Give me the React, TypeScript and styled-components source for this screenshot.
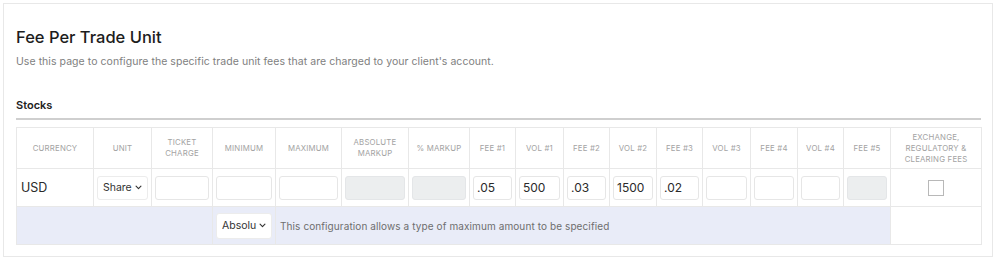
import React from "react";
import styled, { createGlobalStyle } from "styled-components";

const Global = createGlobalStyle`
  html, body { margin: 0; padding: 0; background: #fff; }
  body { font-family: "Inter", "Noto Sans", sans-serif; color: #222; }
  * { box-sizing: border-box; }
`;

const Panel = styled.div`
  margin: 3px;
  width: 990px;
  height: 254px;
  border: 1px solid #e8e8e8;
  padding: 23px 11px 0 12px;
`;

const Title = styled.h1`
  margin: 0;
  font-size: 16.5px;
  line-height: 20px;
  font-weight: 500;
  color: #1d1d1d;
`;

const Subtitle = styled.p`
  margin: 8px 0 0;
  font-size: 10.5px;
  line-height: 14px;
  color: #808080;
  letter-spacing: 0.05px;
`;

const Section = styled.div`
  margin-top: 29px;
  padding-bottom: 6px;
  border-bottom: 2px solid #cfcfcf;
  font-size: 11px;
  line-height: 14px;
  font-weight: 600;
  color: #222;
`;

const Table = styled.table`
  margin-top: 7px;
  width: 965px;
  table-layout: fixed;
  border-collapse: collapse;
  border: 1px solid #dcdcdc;
`;

const Th = styled.th`
  height: 41px;
  padding: 0 2px;
  border: 1px solid #e8e8e8;
  font-size: 7.8px;
  line-height: 11px;
  font-weight: 400;
  color: #a3a3a3;
  text-transform: uppercase;
  text-align: center;
  vertical-align: middle;
  letter-spacing: 0.2px;
`;

const Td = styled.td<{ $blue?: boolean }>`
  height: 38px;
  padding: 0 3px;
  border: 1px solid #e8e8e8;
  background: ${(p) => (p.$blue ? "#e9ecf8" : "#fff")};
  vertical-align: middle;
  font-size: 12px;
  color: #333;
`;

const CurrencyCell = styled(Td)`
  padding-left: 4px;
  font-size: 12.5px;
  color: #2a2a2a;
`;

const Input = styled.div<{ $disabled?: boolean }>`
  height: 24px;
  border: 1px solid ${(p) => (p.$disabled ? "#e4e6e8" : "#e6e6e6")};
  border-radius: 3px;
  background: ${(p) => (p.$disabled ? "#eceeef" : "#fff")};
  font-size: 12px;
  line-height: 22px;
  padding: 0 3px;
  color: #2a2a2a;
`;

const Select = styled.div<{ $tall?: boolean }>`
  height: ${(p) => (p.$tall ? "26px" : "24px")};
  border: 1px solid #ececec;
  border-radius: 3px;
  background: #fff;
  display: flex;
  align-items: center;
  justify-content: space-between;
  padding: 0 5px 0 5px;
  font-size: 10.5px;
  color: #333;
  overflow: hidden;
  white-space: nowrap;
`;

const Chevron = styled.svg`
  flex: none;
  width: 7px;
  height: 7px;
`;

const Note = styled.span`
  padding-left: 1px;
  font-size: 10px;
  color: #6e6e6e;
  letter-spacing: 0.1px;
`;

const Check = styled.div`
  margin: 0 auto;
  width: 16px;
  height: 16px;
  border: 1px solid #b8b8b8;
  background: #fff;
`;

const widths = [77, 58, 61, 63, 66, 67, 61, 46, 48, 46, 47, 46, 48, 47, 46, 47, 91];

const headers: React.ReactNode[] = [
  "Currency",
  "Unit",
  <>Ticket<br />Charge</>,
  "Minimum",
  "Maximum",
  <>Absolute<br />Markup</>,
  "% Markup",
  "Fee #1",
  "Vol #1",
  "Fee #2",
  "Vol #2",
  "Fee #3",
  "Vol #3",
  "Fee #4",
  "Vol #4",
  "Fee #5",
  <>Exchange,<br />Regulatory &amp;<br />Clearing Fees</>,
];

const ChevronIcon = () => (
  <Chevron viewBox="0 0 10 10">
    <path d="M1.5 3 L5 6.5 L8.5 3" fill="none" stroke="#333" strokeWidth="1.6" strokeLinecap="round" strokeLinejoin="round" />
  </Chevron>
);

type Field = { value?: string; disabled?: boolean };

const fields: Field[] = [
  {},
  {},
  {},
  { disabled: true },
  { disabled: true },
  { value: ".05" },
  { value: "500" },
  { value: ".03" },
  { value: "1500" },
  { value: ".02" },
  {},
  {},
  {},
  { disabled: true },
];

export default function App() {
  return (
    <>
      <Global />
      <Panel>
        <Title>Fee Per Trade Unit</Title>
        <Subtitle>
          Use this page to configure the specific trade unit fees that are charged to your client's account.
        </Subtitle>
        <Section>Stocks</Section>
        <Table>
          <colgroup>
            {widths.map((w, i) => (
              <col key={i} style={{ width: w }} />
            ))}
          </colgroup>
          <thead>
            <tr>
              {headers.map((h, i) => (
                <Th key={i}>{h}</Th>
              ))}
            </tr>
          </thead>
          <tbody>
            <tr>
              <CurrencyCell>USD</CurrencyCell>
              <Td>
                <Select>
                  <span>Share</span>
                  <ChevronIcon />
                </Select>
              </Td>
              {fields.map((f, i) => (
                <Td key={i}>
                  <Input $disabled={f.disabled}>{f.value}</Input>
                </Td>
              ))}
              <Td>
                <Check />
              </Td>
            </tr>
            <tr>
              <Td $blue colSpan={3} />
              <Td $blue>
                <Select $tall>
                  <span>Absolu</span>
                  <ChevronIcon />
                </Select>
              </Td>
              <Td $blue colSpan={12}>
                <Note>This configuration allows a type of maximum amount to be specified</Note>
              </Td>
              <Td />
            </tr>
          </tbody>
        </Table>
      </Panel>
    </>
  );
}
